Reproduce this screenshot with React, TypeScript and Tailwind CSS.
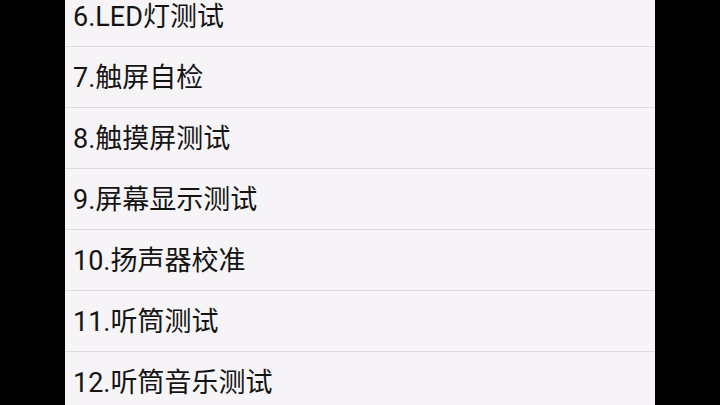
import React from "react"

const items = [
  "6.LED灯测试",
  "7.触屏自检",
  "8.触摸屏测试",
  "9.屏幕显示测试",
  "10.扬声器校准",
  "11.听筒测试",
  "12.听筒音乐测试",
]

export default function App() {
  return (
    <div className="w-[720px] h-[405px] overflow-hidden bg-black flex">
      <div className="ml-[65px] w-[590px] h-full bg-[#f6f4f6] overflow-hidden">
        <ul className="-mt-[14px]" style={{ fontFamily: 'Roboto, "Noto Sans CJK SC", sans-serif' }}>
          {items.map((item, index) => (
            <li
              key={index}
              className="h-[61px] border-b border-[#dcdadc] flex items-center pt-[2px] pl-[8px] text-[27px] font-normal text-[#141414]"
            >
              {item}
            </li>
          ))}
        </ul>
      </div>
    </div>
  )
}
